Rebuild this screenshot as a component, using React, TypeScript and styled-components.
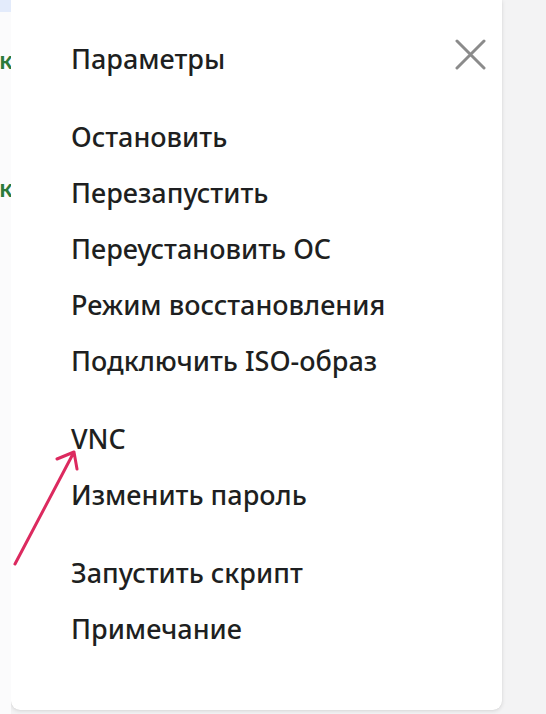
import React from "react";
import styled, { createGlobalStyle } from "styled-components";

const Global = createGlobalStyle`
  html, body { margin: 0; padding: 0; }
  body {
    width: 546px;
    height: 714px;
    overflow: hidden;
    background: #f3f3f4;
    font-family: "Noto Sans", "Open Sans", sans-serif;
  }
`;

const Page = styled.div`
  position: relative;
  display: flex;
  width: 546px;
  height: 714px;
  overflow: hidden;
`;

const Gutter = styled.div`
  position: relative;
  width: 11px;
  flex: none;
  background: #fbfbfc;
  overflow: hidden;
  display: flex;
  flex-direction: column;
  align-items: flex-end;
  padding-top: 47px;
  gap: 102px;
`;

const GutterTop = styled.div`
  position: absolute;
  left: 0;
  top: 0;
  width: 11px;
  height: 12px;
  background: #e3ebfb;
`;

const BgLetter = styled.span`
  font-family: "Noto Sans", sans-serif;
  font-size: 24px;
  line-height: 26px;
  font-weight: 600;
  color: #2b7a3a;
  margin-right: -2px;
`;

const Panel = styled.div`
  width: 491px;
  height: 710px;
  flex: none;
  background: #ffffff;
  border-radius: 0 0 9px 9px;
  box-shadow: 0 1px 4px rgba(0, 0, 0, 0.12), 0 0 1px rgba(0, 0, 0, 0.1);
  box-sizing: border-box;
  padding: 31px 12px 0 60px;
  display: flex;
  flex-direction: column;
  gap: 22px;
`;

const Header = styled.div`
  display: flex;
  align-items: center;
  justify-content: space-between;
  height: 56px;
`;

const Title = styled.h2`
  margin: 0;
  font-size: 27px;
  font-weight: 500;
  color: #1e1f21;
  line-height: 56px;
`;

const Close = styled.button`
  width: 40px;
  height: 40px;
  border: 0;
  background: transparent;
  padding: 0;
  display: flex;
  align-items: center;
  justify-content: center;
  margin-top: -10px;
`;

const Group = styled.ul`
  list-style: none;
  margin: 0;
  padding: 0;
  display: flex;
  flex-direction: column;
`;

const Item = styled.li`
  font-size: 27px;
  font-weight: 500;
  line-height: 56px;
  height: 56px;
  color: #1e1f21;
  white-space: nowrap;
`;

const Arrow = styled.svg`
  position: absolute;
  left: 0;
  top: 440px;
  pointer-events: none;
`;

const groups = [
  ["Остановить", "Перезапустить", "Переустановить ОС", "Режим восстановления", "Подключить ISO-образ"],
  ["VNC", "Изменить пароль"],
  ["Запустить скрипт", "Примечание"],
];

export default function App() {
  return (
    <>
      <Global />
      <Page>
        <Gutter>
          <GutterTop />
          <BgLetter>к</BgLetter>
          <BgLetter>к</BgLetter>
        </Gutter>
        <Panel>
          <Header>
            <Title>Параметры</Title>
            <Close aria-label="Закрыть">
              <svg width="31" height="31" viewBox="0 0 31 31">
                <path d="M2 2 L29 29 M29 2 L2 29" stroke="#8b8b8b" strokeWidth="3" strokeLinecap="round" />
              </svg>
            </Close>
          </Header>
          {groups.map((g, i) => (
            <Group key={i}>
              {g.map((t) => (
                <Item key={t}>{t}</Item>
              ))}
            </Group>
          ))}
        </Panel>
        <Arrow width="100" height="140" viewBox="0 0 100 140">
          <path
            d="M15 124 L74 12 M57 19 L74 12 L77 29"
            stroke="#dc2a5f"
            strokeWidth="3"
            fill="none"
            strokeLinecap="round"
            strokeLinejoin="round"
          />
        </Arrow>
      </Page>
    </>
  );
}
